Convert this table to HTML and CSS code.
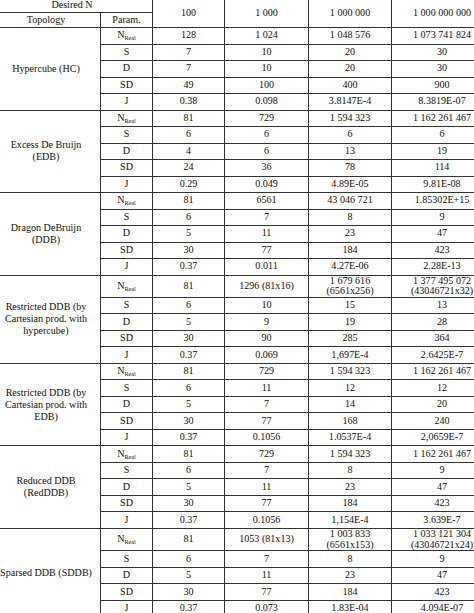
FILE: index.html
```html
<!DOCTYPE html>
<html>
<head>
<meta charset="utf-8">
<link rel="stylesheet" href="styles.css">
</head>
<body>
<div class="frame">
<table class="grid">
<colgroup>
<col class="c-topo"><col class="c-param"><col class="c-n1"><col class="c-n2"><col class="c-n3"><col class="c-n4">
</colgroup>
<thead>
<tr class="h1"><th colspan="2">Desired N</th><th rowspan="2">100</th><th rowspan="2">1 000</th><th rowspan="2">1 000 000</th><th rowspan="2">1 000 000 000</th></tr>
<tr class="h2"><th>Topology</th><th>Param.</th></tr>
</thead>
<tbody>
<tr><td rowspan="5" class="topo">Hypercube (HC)</td><td>N<sub>Real</sub></td><td>128</td><td>1 024</td><td>1 048 576</td><td>1 073 741 824</td></tr>
<tr><td>S</td><td>7</td><td>10</td><td>20</td><td>30</td></tr>
<tr><td>D</td><td>7</td><td>10</td><td>20</td><td>30</td></tr>
<tr><td>SD</td><td>49</td><td>100</td><td>400</td><td>900</td></tr>
<tr><td>J</td><td>0.38</td><td>0.098</td><td>3.8147E-4</td><td>8.3819E-07</td></tr>

<tr><td rowspan="5" class="topo">Excess De Bruijn<br>(EDB)</td><td>N<sub>Real</sub></td><td>81</td><td>729</td><td>1 594 323</td><td>1 162 261 467</td></tr>
<tr><td>S</td><td>6</td><td>6</td><td>6</td><td>6</td></tr>
<tr><td>D</td><td>4</td><td>6</td><td>13</td><td>19</td></tr>
<tr><td>SD</td><td>24</td><td>36</td><td>78</td><td>114</td></tr>
<tr><td>J</td><td>0.29</td><td>0.049</td><td>4.89E-05</td><td>9.81E-08</td></tr>

<tr><td rowspan="5" class="topo">Dragon DeBruijn<br>(DDB)</td><td>N<sub>Real</sub></td><td>81</td><td>6561</td><td>43 046 721</td><td>1.85302E+15</td></tr>
<tr><td>S</td><td>6</td><td>7</td><td>8</td><td>9</td></tr>
<tr><td>D</td><td>5</td><td>11</td><td>23</td><td>47</td></tr>
<tr><td>SD</td><td>30</td><td>77</td><td>184</td><td>423</td></tr>
<tr><td>J</td><td>0.37</td><td>0.011</td><td>4.27E-06</td><td>2.28E-13</td></tr>

<tr class="tall"><td rowspan="5" class="topo">Restricted DDB (by<br>Cartesian prod. with<br>hypercube)</td><td>N<sub>Real</sub></td><td>81</td><td>1296 (81x16)</td><td>1 679 616<br>(6561x256)</td><td>1 377 495 072<br>(43046721x32)</td></tr>
<tr><td>S</td><td>6</td><td>10</td><td>15</td><td>13</td></tr>
<tr><td>D</td><td>5</td><td>9</td><td>19</td><td>28</td></tr>
<tr><td>SD</td><td>30</td><td>90</td><td>285</td><td>364</td></tr>
<tr><td>J</td><td>0.37</td><td>0.069</td><td>1,697E-4</td><td>2.6425E-7</td></tr>

<tr><td rowspan="5" class="topo">Restricted DDB (by<br>Cartesian prod. with<br>EDB)</td><td>N<sub>Real</sub></td><td>81</td><td>729</td><td>1 594 323</td><td>1 162 261 467</td></tr>
<tr><td>S</td><td>6</td><td>11</td><td>12</td><td>12</td></tr>
<tr><td>D</td><td>5</td><td>7</td><td>14</td><td>20</td></tr>
<tr><td>SD</td><td>30</td><td>77</td><td>168</td><td>240</td></tr>
<tr><td>J</td><td>0.37</td><td>0.1056</td><td>1.0537E-4</td><td>2,0659E-7</td></tr>

<tr><td rowspan="5" class="topo">Reduced DDB<br>(RedDDB)</td><td>N<sub>Real</sub></td><td>81</td><td>729</td><td>1 594 323</td><td>1 162 261 467</td></tr>
<tr><td>S</td><td>6</td><td>7</td><td>8</td><td>9</td></tr>
<tr><td>D</td><td>5</td><td>11</td><td>23</td><td>47</td></tr>
<tr><td>SD</td><td>30</td><td>77</td><td>184</td><td>423</td></tr>
<tr><td>J</td><td>0.37</td><td>0.1056</td><td>1,154E-4</td><td>3.639E-7</td></tr>

<tr class="tall"><td rowspan="5" class="topo">Sparsed DDB (SDDB)</td><td>N<sub>Real</sub></td><td>81</td><td>1053 (81x13)</td><td>1 003 833<br>(6561x153)</td><td>1 033 121 304<br>(43046721x24)</td></tr>
<tr><td>S</td><td>6</td><td>7</td><td>8</td><td>9</td></tr>
<tr><td>D</td><td>5</td><td>11</td><td>23</td><td>47</td></tr>
<tr><td>SD</td><td>30</td><td>77</td><td>184</td><td>423</td></tr>
<tr><td>J</td><td>0.37</td><td>0.073</td><td>1.83E-04</td><td>4.094E-07</td></tr>
</tbody>
</table>
</div>
</body>
</html>
```

FILE: styles.css
```css
html, body {
  margin: 0;
  padding: 0;
  overflow: hidden;
  background: #ffffff;
}

body {
  font-family: "Liberation Serif", "Times New Roman", serif;
  font-size: 10.1px;
  color: #111111;
}

.frame {
  width: 474px;
  height: 613px;
  overflow: hidden;
}

.grid {
  border-collapse: collapse;
  table-layout: fixed;
  width: 501px;
  margin: -2px 0 0 -9px;
}

.c-topo { width: 109px; }
.c-param { width: 52px; }
.c-n1 { width: 72px; }
.c-n2 { width: 84px; }
.c-n3 { width: 83px; }
.c-n4 { width: 101px; }

.grid th,
.grid td {
  border: 1px solid #333333;
  padding: 0 1px;
  text-align: center;
  vertical-align: middle;
  line-height: 10.7px;
  font-weight: normal;
  white-space: nowrap;
}

.grid .topo {
  line-height: 12px;
}

.h1 { height: 14px; }
.h2 { height: 15px; }

.grid tbody tr { height: 16.5px; }
.grid tbody tr.tall { height: 22px; }

.grid sub {
  font-size: 6.2px;
  line-height: 0;
  vertical-align: -2px;
}
```
